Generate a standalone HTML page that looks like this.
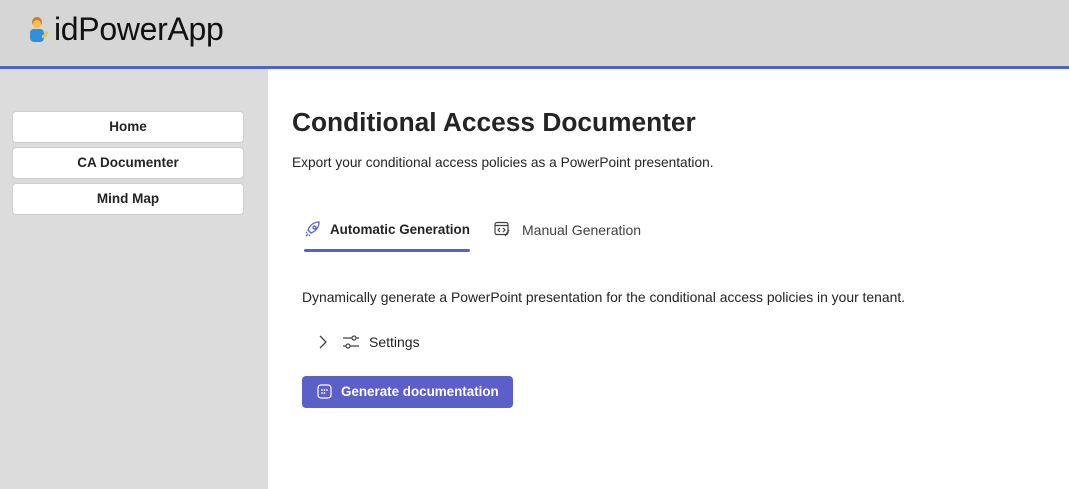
<!DOCTYPE html>
<html><head><meta charset="utf-8"><style>
*{margin:0;padding:0;box-sizing:border-box}
body{width:1069px;height:489px;overflow:hidden;font-family:"Liberation Sans",sans-serif;background:#fff;position:relative;color:#242424}
.hdr{position:absolute;left:0;top:0;width:1069px;height:69px;background:#d6d6d6;border-bottom:3px solid #4d63c9}
.logo{position:absolute;left:54px;top:11px;font-size:32px;color:#111;letter-spacing:-0.3px}
.side{position:absolute;left:0;top:69px;width:268px;height:420px;background:#dcdcdc}
.nb{position:absolute;left:12px;width:232px;height:32px;background:#fff;border:1px solid #cfcfcf;border-radius:4px;font-size:13.5px;font-weight:bold;text-align:center;line-height:30px;color:#242424}
.abs{position:absolute;white-space:nowrap}
</style></head><body>
<div class="hdr">
<svg class="abs" style="left:28px;top:16px" width="22" height="28" viewBox="0 0 22 28"><circle cx="9" cy="6" r="5" fill="#d8742b"/><circle cx="9" cy="8" r="4" fill="#f5c04a"/><rect x="2" y="13" width="14" height="13" rx="4" fill="#2f8fd8"/><path d="M14 22c4 0 6-3 6-6l-3-1c0 2-1 4-3 4z" fill="#f5c04a"/></svg>
<div class="logo">idPowerApp</div>
</div>
<div class="side">
<div class="nb" style="top:42px">Home</div>
<div class="nb" style="top:78px">CA Documenter</div>
<div class="nb" style="top:114px">Mind Map</div>
</div>
<div class="abs" style="left:292px;top:107px;font-size:26.3px;font-weight:bold;color:#242424">Conditional Access Documenter</div>
<div class="abs" style="left:292px;top:155px;font-size:13.7px">Export your conditional access policies as a PowerPoint presentation.</div>
<svg class="abs" style="left:304px;top:221px" width="17" height="17" viewBox="0 0 17 17" fill="none" stroke="#5b5fc7" stroke-width="1.3"><path d="M6 11l-2-2c2-5 6-8 11-8 0 5-3 9-8 11z"/><circle cx="10.5" cy="6.5" r="1.5"/><path d="M4 13l-2 2M3 11l-1 1M6 14l-1 1"/></svg>
<div class="abs" style="left:330px;top:222px;font-size:13.4px;font-weight:bold">Automatic Generation</div>
<div class="abs" style="left:304px;top:249px;width:166px;height:3px;background:#5b5fc7;border-radius:2px"></div>
<svg class="abs" style="left:494px;top:221px" width="18" height="17" viewBox="0 0 18 17" fill="none" stroke="#424242" stroke-width="1.2"><rect x="1" y="1.5" width="13" height="12" rx="2"/><path d="M1 4.5h13M6 7l-2 2 2 2M9 7l2 2-2 2M15 9l-4 6"/></svg>
<div class="abs" style="left:522px;top:222px;font-size:14px;color:#424242">Manual Generation</div>
<div class="abs" style="left:302px;top:289px;font-size:13.9px">Dynamically generate a PowerPoint presentation for the conditional access policies in your tenant.</div>
<svg class="abs" style="left:318px;top:335px" width="10" height="14" viewBox="0 0 10 14" fill="none" stroke="#424242" stroke-width="1.3"><path d="M2 1l6 6-6 6"/></svg>
<svg class="abs" style="left:342px;top:333px" width="18" height="18" viewBox="0 0 18 18" fill="none" stroke="#424242" stroke-width="1.2"><path d="M1 5h9M14 5h3M1 13h3M8 13h9"/><circle cx="12" cy="5" r="2"/><circle cx="6" cy="13" r="2"/></svg>
<div class="abs" style="left:369px;top:334px;font-size:14px">Settings</div>
<div class="abs" style="left:302px;top:376px;width:211px;height:32px;background:#5b5fc7;border-radius:4px"></div>
<svg class="abs" style="left:317px;top:384px" width="15" height="15" viewBox="0 0 15 15" fill="none" stroke="#fff" stroke-width="1.2"><rect x="1" y="1" width="13" height="13" rx="3"/><path d="M5 6h.01M7.5 6h.01M10 6h.01M5 9h.01M7.5 9h.01" stroke-width="1.8" stroke-linecap="round"/></svg>
<div class="abs" style="left:341px;top:384px;font-size:13.4px;font-weight:bold;color:#fff">Generate documentation</div>
</body></html>
